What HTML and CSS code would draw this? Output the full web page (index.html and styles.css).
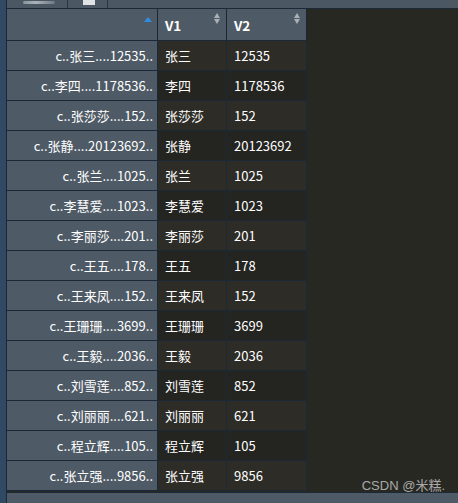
FILE: index.html
```html
<!DOCTYPE html>
<html lang="zh">
<head>
<meta charset="utf-8">
<link rel="stylesheet" href="styles.css">
</head>
<body>
<div class="frame">
  <div class="strip"></div>
  <div class="pane">
    <div class="toolbar">
      <span class="tb-arrow"></span>
      <span class="tb-sep"></span>
      <span class="tb-box"></span>
      <span class="tb-sep"></span>
    </div>
    <div class="viewer">
      <div class="grid">
        <div class="hcell hname"><span class="sort-asc"></span></div>
        <div class="hcell">V1<span class="sort-both"></span></div>
        <div class="hcell">V2<span class="sort-both"></span></div>

        <div class="name">c..张三....12535..</div><div class="cell odd">张三</div><div class="cell odd">12535</div>
        <div class="name">c..李四....1178536..</div><div class="cell even">李四</div><div class="cell even">1178536</div>
        <div class="name">c..张莎莎....152..</div><div class="cell odd">张莎莎</div><div class="cell odd">152</div>
        <div class="name">c..张静....20123692..</div><div class="cell even">张静</div><div class="cell even">20123692</div>
        <div class="name">c..张兰....1025..</div><div class="cell odd">张兰</div><div class="cell odd">1025</div>
        <div class="name">c..李慧爱....1023..</div><div class="cell even">李慧爱</div><div class="cell even">1023</div>
        <div class="name">c..李丽莎....201..</div><div class="cell odd">李丽莎</div><div class="cell odd">201</div>
        <div class="name">c..王五....178..</div><div class="cell even">王五</div><div class="cell even">178</div>
        <div class="name">c..王来凤....152..</div><div class="cell odd">王来凤</div><div class="cell odd">152</div>
        <div class="name">c..王珊珊....3699..</div><div class="cell even">王珊珊</div><div class="cell even">3699</div>
        <div class="name">c..王毅....2036..</div><div class="cell odd">王毅</div><div class="cell odd">2036</div>
        <div class="name">c..刘雪莲....852..</div><div class="cell even">刘雪莲</div><div class="cell even">852</div>
        <div class="name">c..刘丽丽....621..</div><div class="cell odd">刘丽丽</div><div class="cell odd">621</div>
        <div class="name">c..程立辉....105..</div><div class="cell even">程立辉</div><div class="cell even">105</div>
        <div class="name">c..张立强....9856..</div><div class="cell odd">张立强</div><div class="cell odd">9856</div>
      </div>
      <div class="watermark">CSDN @米糕.</div>
    </div>
    <div class="statusbar"></div>
  </div>
</div>
</body>
</html>
```

FILE: styles.css
```css
html, body {
  margin: 0;
  padding: 0;
  height: 100%;
  background: #282823;
  font-family: "Noto Sans CJK SC", "Open Sans", sans-serif;
  font-size: 13px;
  color: #ffffff;
}

.frame {
  display: flex;
  height: 503px;
  overflow: hidden;
}

.strip {
  width: 6px;
  flex: none;
  background: #2f4a62;
  border-right: 1px solid #1b2838;
}

.pane {
  flex: 1;
  display: flex;
  flex-direction: column;
  min-width: 0;
}

.toolbar {
  height: 8px;
  flex: none;
  background: #4b5762;
  border-bottom: 1px solid #1b2838;
  display: flex;
  align-items: flex-end;
  overflow: hidden;
}

.tb-arrow {
  width: 32px;
  height: 3px;
  margin-left: 16px;
  margin-bottom: 4px;
  background: linear-gradient(90deg, #8a939b, #aab2b9 40%, #6f7982);
  border-radius: 2px;
}

.tb-sep {
  width: 1px;
  height: 8px;
  background: #2a3643;
  margin-left: 12px;
}

.tb-box {
  width: 12px;
  height: 5px;
  margin-left: 15px;
  margin-bottom: 3px;
  background: #dfe3e6;
}

.viewer {
  flex: 1;
  position: relative;
  background: #282823;
}

.grid {
  display: grid;
  grid-template-columns: 151px 69px 80px;
  grid-template-rows: 32px repeat(15, 30px);
  width: max-content;
}

.hcell, .name, .cell {
  border-right: 1px solid #1b2838;
  border-bottom: 1px solid #1b2838;
  display: flex;
  align-items: center;
  white-space: nowrap;
  overflow: hidden;
}

.hcell {
  position: relative;
  background: #4e5a65;
  font-weight: bold;
  font-size: 13.5px;
  padding-left: 7px;
}

.hname {
  padding-left: 0;
}

.name {
  background: #4e5a65;
  justify-content: flex-end;
  padding-right: 4px;
}

.cell {
  padding-left: 7px;
}

.odd {
  background: #2d2c27;
}

.even {
  background: #242420;
}

.sort-asc {
  position: absolute;
  right: 5px;
  top: 8px;
  width: 0;
  height: 0;
  border-left: 4.5px solid transparent;
  border-right: 4.5px solid transparent;
  border-bottom: 5px solid #2e8de0;
}

.sort-both {
  position: absolute;
  right: 5px;
  top: 4px;
  width: 7px;
  height: 11px;
}

.sort-both::before, .sort-both::after {
  content: "";
  position: absolute;
  left: 0;
  width: 0;
  height: 0;
  border-left: 3.5px solid transparent;
  border-right: 3.5px solid transparent;
}

.sort-both::before {
  top: 0;
  border-bottom: 5px solid #a9b0b7;
}

.sort-both::after {
  bottom: 0;
  border-top: 5px solid #a9b0b7;
}

.watermark {
  position: absolute;
  right: 13px;
  bottom: -1px;
  font-family: "Liberation Sans", "Noto Sans CJK SC", sans-serif;
  font-size: 13px;
  color: #a9a9a9;
  line-height: 15px;
}

.statusbar {
  height: 10px;
  flex: none;
  background: #4e5a65;
  border-top: 1px solid #1b2838;
}
```
